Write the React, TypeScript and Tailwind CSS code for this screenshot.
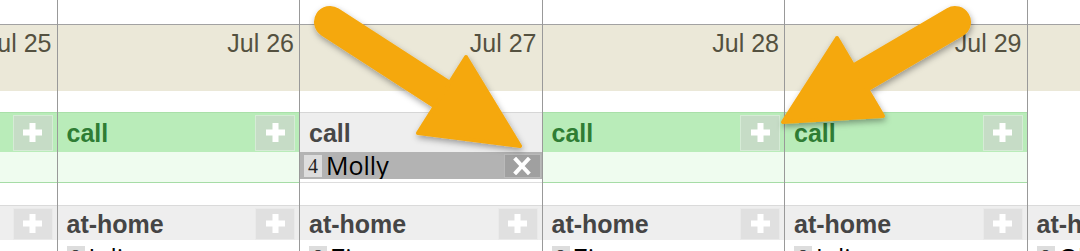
type CallState = "green" | "dragging" | "none";

type Day = {
  date: string;
  call: CallState;
  person: string;
};

const days: Day[] = [
  { date: "Jul 25", call: "green", person: "Julia" },
  { date: "Jul 26", call: "green", person: "Julia" },
  { date: "Jul 27", call: "dragging", person: "Zimmer" },
  { date: "Jul 28", call: "green", person: "Zimmer" },
  { date: "Jul 29", call: "green", person: "Julia" },
  { date: "Jul 30", call: "none", person: "Olivia" },
];

function PlusIcon() {
  return (
    <svg width="19" height="19" viewBox="0 0 19 19">
      <rect x="6.5" y="0" width="6" height="19" fill="#ffffff" />
      <rect x="0" y="6.5" width="19" height="6" fill="#ffffff" />
    </svg>
  );
}

function CloseIcon() {
  return (
    <svg width="20" height="18" viewBox="0 0 20 18">
      <path d="M4 2.5 L16 15.5 M16 2.5 L4 15.5" stroke="#ffffff" strokeWidth="4" strokeLinecap="square" />
    </svg>
  );
}

function PlusButton({ tone }: { tone: "green" | "gray" }) {
  return (
    <div
      className={
        tone === "green"
          ? "w-[40px] h-[36px] flex items-center justify-center bg-[#c6dcc6] border border-[#d6ebd6]"
          : "w-[40px] h-[32px] flex items-center justify-center bg-[#e0e0e0] border border-[#eaeaea]"
      }
    >
      <PlusIcon />
    </div>
  );
}

function Card({ num, name, dark }: { num: string; name: string; dark?: boolean }) {
  return (
    <div className={dark ? "h-[27px] flex items-center bg-[#b3b3b3]" : "h-[30px] flex items-center bg-white pl-[5px] pt-[4px]"}>
      <span className="ml-[4px] w-[18px] h-[22px] flex items-center justify-center bg-[#dddddd] text-[20px] leading-[22px] text-[#222] font-['Liberation_Serif',serif]">
        {num}
      </span>
      <span className="ml-[4px] flex-1 text-[25px] leading-[27px] text-black font-['Open_Sans',sans-serif] whitespace-nowrap overflow-hidden">
        {name}
      </span>
      {dark && (
        <span className="w-[37px] h-[24px] mr-[1px] flex items-center justify-center bg-[#a0a0a0] border border-[#bababa]">
          <CloseIcon />
        </span>
      )}
    </div>
  );
}

function CallSection({ state }: { state: CallState }) {
  if (state === "none") {
    return <div className="h-[71px]" />;
  }
  if (state === "dragging") {
    return (
      <div className="h-[71px] flex flex-col">
        <div className="h-[40px] flex items-center pl-[9px] bg-[#eeeeee] border-t border-[#d6d6d6]">
          <span className="text-[25px] leading-[28px] font-bold text-[#474747]">call</span>
        </div>
        <Card num="4" name="Molly" dark />
        <div className="flex-1 border-b border-[#dddddd]" />
      </div>
    );
  }
  return (
    <div className="h-[71px] flex flex-col">
      <div className="h-[40px] flex items-center justify-between pl-[9px] pr-[4px] bg-[#b9ecb9] border-t border-[#a9e0a9]">
        <span className="text-[25px] leading-[28px] font-bold text-[#2f7d34]">call</span>
        <PlusButton tone="green" />
      </div>
      <div className="flex-1 bg-[#effcef] border-b border-[#a6dca6]" />
    </div>
  );
}

function Column({ day }: { day: Day }) {
  return (
    <div className="w-[242.5px] shrink-0 flex flex-col border-r border-[#999999]">
      <div className="h-[25px] border-b border-[#a2a2a2]" />
      <div className="h-[66px] bg-[#ebe8d8] text-right pr-[5px] pt-[4px] text-[25px] leading-[28px] text-[#545140] whitespace-nowrap">
        {day.date}
      </div>
      <div className="h-[21px]" />
      <CallSection state={day.call} />
      <div className="h-[22px]" />
      <div className="h-[35px] flex items-center justify-between pl-[9px] pr-[4px] pt-[1px] bg-[#eeeeee] border-t border-[#dadada]">
        <span className="text-[25px] leading-[28px] font-bold text-[#454545] whitespace-nowrap">at-home</span>
        <PlusButton tone="gray" />
      </div>
      <Card num="8" name={day.person} />
    </div>
  );
}

function Arrows() {
  return (
    <svg className="absolute left-0 top-0 pointer-events-none" width="1080" height="251" viewBox="0 0 1080 251">
      <defs>
        <filter id="arrowShadow" x="-20%" y="-20%" width="140%" height="140%">
          <feDropShadow dx="1" dy="3" stdDeviation="3" floodColor="#000000" floodOpacity="0.35" />
        </filter>
      </defs>
      <g filter="url(#arrowShadow)" fill="#f5a811" stroke="#f5a811">
        <line x1="330" y1="22" x2="446" y2="97" strokeWidth="32" strokeLinecap="round" />
        <polygon points="466,57 520,146 418,133" strokeWidth="4" strokeLinejoin="round" />
      </g>
      <g filter="url(#arrowShadow)" fill="#f5a811" stroke="#f5a811">
        <line x1="955" y1="22" x2="856" y2="80" strokeWidth="32" strokeLinecap="round" />
        <polygon points="837,38 783,122 883,116" strokeWidth="4" strokeLinejoin="round" />
      </g>
    </svg>
  );
}

export default function App() {
  return (
    <div className="relative w-[1080px] h-[251px] overflow-hidden bg-white font-['Liberation_Sans',Arial,sans-serif]">
      <div className="flex -ml-[185px]">
        {days.map((d) => (
          <Column key={d.date} day={d} />
        ))}
      </div>
      <Arrows />
    </div>
  );
}
